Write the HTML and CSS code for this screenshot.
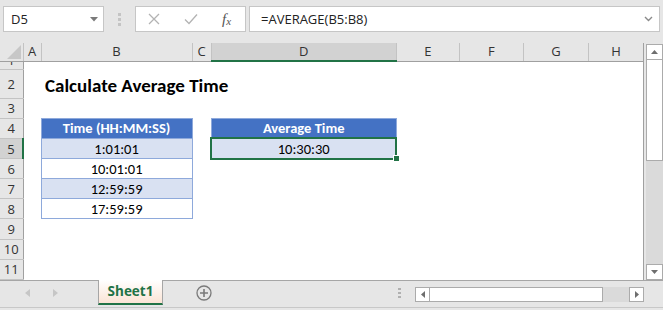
FILE: index.html
```html
<!DOCTYPE html>
<html lang="en">
<head>
    <meta charset="UTF-8">
    <meta name="viewport" content="width=device-width, initial-scale=1.0">
    <title>Calculate Average Time</title>
    <link rel="stylesheet" href="styles.css">
</head>
<body>
    <!-- Name box + formula bar -->
    <div class="formula-bar">
        <div class="name-box">
            <span>D5</span>
            <svg class="caret" width="8" height="5" viewBox="0 0 8 5"><path d="M0 0H8L4 4.5Z" fill="#7a7a7a"/></svg>
        </div>
        <div class="grip">
            <svg width="3" height="13" viewBox="0 0 3 13"><rect y="0" width="3" height="3" fill="#c4c4c4"/><rect y="5" width="3" height="3" fill="#c4c4c4"/><rect y="10" width="3" height="3" fill="#c4c4c4"/></svg>
        </div>
        <div class="fx-buttons">
            <svg width="12" height="12" viewBox="0 0 12 12"><path d="M1 1L11 11M11 1L1 11" stroke="#b3b3b3" stroke-width="1.3" fill="none"/></svg>
            <svg width="14" height="12" viewBox="0 0 14 12"><path d="M1 6.5L5 10.5L13 1.5" stroke="#b3b3b3" stroke-width="1.3" fill="none"/></svg>
            <span class="fx">f<sub>x</sub></span>
        </div>
        <div class="formula-input">
            <span>=AVERAGE(B5:B8)</span>
            <svg width="9" height="6" viewBox="0 0 9 6"><path d="M1 1L4.5 4.5L8 1" stroke="#8a8a8a" stroke-width="1.4" fill="none"/></svg>
        </div>
    </div>

    <div class="sheet-area">
        <table class="grid">
            <colgroup>
                <col class="w-hdr">
                <col class="w-a">
                <col class="w-b">
                <col class="w-c">
                <col class="w-d">
                <col class="w-e">
                <col class="w-f">
                <col class="w-g">
                <col class="w-h">
            </colgroup>
            <thead>
                <tr class="col-heads">
                    <th class="corner">
                        <svg width="16" height="15" viewBox="0 0 16 15"><path d="M15 0V14H1Z" fill="#c7c7c7"/></svg>
                    </th>
                    <th>A</th>
                    <th>B</th>
                    <th>C</th>
                    <th class="selected">D</th>
                    <th>E</th>
                    <th>F</th>
                    <th>G</th>
                    <th>H</th>
                </tr>
            </thead>
            <tbody>
                <tr class="r-short">
                    <th><div class="clip"><div>1</div></div></th>
                    <td colspan="8"></td>
                </tr>
                <tr class="r-tall">
                    <th>2</th>
                    <td></td>
                    <td colspan="7" class="title">Calculate Average Time</td>
                </tr>
                <tr>
                    <th>3</th>
                    <td colspan="8"></td>
                </tr>
                <tr>
                    <th>4</th>
                    <td></td>
                    <td class="tbl-head">Time (HH:MM:SS)</td>
                    <td></td>
                    <td class="tbl-head">Average Time</td>
                    <td colspan="4"></td>
                </tr>
                <tr>
                    <th class="selected">5</th>
                    <td></td>
                    <td class="tbl-cell band">1:01:01</td>
                    <td></td>
                    <td class="tbl-cell band active">10:30:30</td>
                    <td colspan="4"></td>
                </tr>
                <tr>
                    <th>6</th>
                    <td></td>
                    <td class="tbl-cell">10:01:01</td>
                    <td colspan="6"></td>
                </tr>
                <tr>
                    <th>7</th>
                    <td></td>
                    <td class="tbl-cell band">12:59:59</td>
                    <td colspan="6"></td>
                </tr>
                <tr>
                    <th>8</th>
                    <td></td>
                    <td class="tbl-cell">17:59:59</td>
                    <td colspan="6"></td>
                </tr>
                <tr>
                    <th>9</th>
                    <td colspan="8"></td>
                </tr>
                <tr>
                    <th>10</th>
                    <td colspan="8"></td>
                </tr>
                <tr>
                    <th>11</th>
                    <td colspan="8"></td>
                </tr>
            </tbody>
        </table>

        <div class="vscroll">
            <div class="sb-btn">
                <svg width="7" height="4" viewBox="0 0 7 4"><path d="M0 4H7L3.5 0Z" fill="#6e6e6e"/></svg>
            </div>
            <div class="sb-thumb"></div>
            <div class="sb-track"></div>
            <div class="sb-btn">
                <svg width="7" height="4" viewBox="0 0 7 4"><path d="M0 0H7L3.5 4Z" fill="#6e6e6e"/></svg>
            </div>
        </div>
    </div>

    <!-- Sheet tabs + horizontal scroll -->
    <div class="tab-bar">
        <div class="tab-nav">
            <svg width="5" height="8" viewBox="0 0 5 8"><path d="M5 0V8L0 4Z" fill="#c6c6c6"/></svg>
            <svg width="5" height="8" viewBox="0 0 5 8"><path d="M0 0V8L5 4Z" fill="#c6c6c6"/></svg>
        </div>
        <div class="sheet-tab">Sheet1</div>
        <div class="add-sheet">
            <svg width="16" height="16" viewBox="0 0 16 16"><circle cx="8" cy="8" r="7" stroke="#7a7a7a" stroke-width="1.3" fill="none"/><path d="M8 4V12M4 8H12" stroke="#7a7a7a" stroke-width="1.6"/></svg>
        </div>
        <div class="tab-grip">
            <svg width="3" height="11" viewBox="0 0 3 11"><rect y="0" width="3" height="2" fill="#b0b0b0"/><rect y="4" width="3" height="2" fill="#b0b0b0"/><rect y="8" width="3" height="2" fill="#b0b0b0"/></svg>
        </div>
        <div class="hscroll">
            <div class="sb-btn">
                <svg width="4" height="7" viewBox="0 0 4 7"><path d="M4 0V7L0 3.5Z" fill="#6e6e6e"/></svg>
            </div>
            <div class="sb-thumb"></div>
            <div class="sb-track"></div>
            <div class="sb-btn">
                <svg width="4" height="7" viewBox="0 0 4 7"><path d="M0 0V7L4 3.5Z" fill="#6e6e6e"/></svg>
            </div>
        </div>
    </div>
    <div class="status-edge"></div>
</body>
</html>
```

FILE: styles.css
```css
body {
    margin: 0;
    width: 663px;
    height: 310px;
    overflow: hidden;
    background-color: #e6e6e6;
    font-family: "Open Sans", "Noto Sans", Arial, sans-serif;
    color: #222;
}

/* ---- formula bar ---- */
.formula-bar {
    display: flex;
    align-items: flex-start;
    height: 43px;
    padding: 6px 3px 0 3px;
    box-sizing: border-box;
}
.name-box,
.fx-buttons,
.formula-input {
    height: 26px;
    box-sizing: border-box;
    background: #fff;
    border: 1px solid #c6c6c6;
    display: flex;
    align-items: center;
}
.name-box {
    width: 101px;
    justify-content: space-between;
    padding: 0 5px 0 7px;
    font-size: 13px;
}
.grip {
    width: 31px;
    height: 26px;
    display: flex;
    align-items: center;
    justify-content: center;
}
.fx-buttons {
    width: 111px;
    padding-left: 12px;
    gap: 24px;
}
.fx {
    font-family: "Liberation Serif", "DejaVu Serif", serif;
    font-style: italic;
    font-size: 15px;
    color: #555;
    line-height: 1;
}
.fx sub {
    font-size: 11px;
    vertical-align: -1px;
}
.formula-input {
    flex: 1;
    margin-left: 3px;
    justify-content: space-between;
    padding: 0 6px 0 11px;
    font-size: 13px;
}

/* ---- grid ---- */
.sheet-area {
    display: flex;
    height: 237px;
}
.grid {
    width: 644px;
    table-layout: fixed;
    border-collapse: collapse;
    background: #fff;
    border-right: 1px solid #a0a0a0;
    font-family: "Carlito", Lato, "Open Sans", sans-serif;
    font-size: 14.5px;
    color: #000;
}
.w-hdr { width: 23px; }
.w-a { width: 18px; }
.w-b { width: 151px; }
.w-c { width: 19px; }
.w-d { width: 185px; }
.w-e { width: 63px; }
.w-f { width: 64px; }
.w-g { width: 65px; }
.w-h { width: 55px; }

.grid th,
.grid td {
    padding: 0;
    overflow: hidden;
    white-space: nowrap;
}
.grid th {
    background: #e6e6e6;
    font-family: "Open Sans", "Noto Sans", sans-serif;
    font-weight: normal;
    font-size: 13px;
    color: #333;
}
.col-heads {
    height: 18px;
}
.col-heads th {
    border-right: 1px solid #c3c3c3;
    border-bottom: 1px solid #a0a0a0;
    line-height: 17px;
}
.col-heads th:last-child {
    border-right: none;
}
.col-heads th.selected {
    background: #d2d2d2;
    border-bottom: 2px solid #217346;
}
.corner {
    text-align: right;
    vertical-align: bottom;
}
.corner svg {
    display: block;
    margin: 0 1px 1px auto;
}

tbody tr {
    height: 20px;
}
tbody th {
    border-right: 1px solid #a0a0a0;
    border-bottom: 1px solid #c3c3c3;
    line-height: 18px;
}
tbody th.selected {
    background: #d2d2d2;
    border-right: 2px solid #217346;
}
tr.r-short {
    height: 8px;
}
.clip {
    height: 7px;
    overflow: hidden;
}
.clip div {
    line-height: 18px;
    margin-top: -11px;
}
tr.r-tall {
    height: 29px;
}

.title {
    font-size: 19px;
    font-weight: bold;
    vertical-align: bottom;
    line-height: 22px;
    padding: 0 0 1px 4px !important;
}
.tbl-head {
    background: #4472c4;
    color: #fff;
    font-weight: bold;
    text-align: center;
    border: 1px solid #8ea9db;
}
.tbl-cell {
    text-align: center;
    border: 1px solid #8ea9db;
}
.band {
    background: #d9e1f2;
}
.active {
    position: relative;
    outline: 2px solid #217346;
    outline-offset: -1px;
    overflow: visible !important;
}
.active::after {
    content: "";
    position: absolute;
    right: -4px;
    bottom: -4px;
    width: 5px;
    height: 5px;
    background: #217346;
    border: 1px solid #fff;
}

/* ---- scroll bars ---- */
.vscroll {
    width: 17px;
    margin: 1px 0 0 2px;
    display: flex;
    flex-direction: column;
}
.sb-btn {
    background: #fff;
    border: 1px solid #ababab;
    box-sizing: border-box;
    display: flex;
    align-items: center;
    justify-content: center;
}
.vscroll .sb-btn {
    height: 16px;
}
.vscroll .sb-thumb {
    height: 100px;
    background: #fff;
    border: 1px solid #ababab;
    border-top: none;
}
.sb-track {
    flex: 1;
    background: #dadada;
}

/* ---- sheet tabs ---- */
.tab-bar {
    display: flex;
    align-items: flex-start;
    height: 27px;
    box-sizing: border-box;
    border-top: 1px solid #a6a6a6;
}
.tab-nav {
    width: 98px;
    height: 24px;
    display: flex;
    align-items: center;
    gap: 23px;
    padding-left: 25px;
    box-sizing: border-box;
}
.sheet-tab {
    width: 65px;
    height: 25px;
    margin-top: -1px;
    box-sizing: border-box;
    border-left: 1px solid #a6a6a6;
    border-right: 1px solid #a6a6a6;
    border-bottom: 2px solid #217346;
    background: linear-gradient(#ffffff, #fbe4d5);
    color: #217346;
    font-weight: bold;
    font-size: 13.5px;
    text-align: center;
    line-height: 23px;
}
.add-sheet {
    width: 83px;
    height: 24px;
    display: flex;
    align-items: center;
    padding-left: 33px;
    box-sizing: border-box;
}
.tab-grip {
    width: 169px;
    height: 24px;
    display: flex;
    align-items: center;
    justify-content: flex-end;
    padding-right: 14px;
    box-sizing: border-box;
}
.hscroll {
    width: 229px;
    height: 15px;
    margin-top: 6px;
    display: flex;
}
.hscroll .sb-btn {
    width: 15px;
}
.hscroll .sb-thumb {
    width: 173px;
    background: #fff;
    border: 1px solid #ababab;
    border-left: none;
    box-sizing: border-box;
}
.status-edge {
    height: 1px;
    background: #c8c8c8;
}
```
